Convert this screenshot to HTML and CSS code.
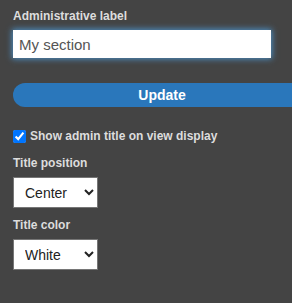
FILE: index.html
```html
<!DOCTYPE html>
<html lang="en">
<head>
    <meta charset="UTF-8">
    <title>Section settings</title>
    <link rel="stylesheet" href="styles.css">
</head>
<body>
    <div class="panel">
        <label class="label" for="admin-label">Administrative label</label>
        <input type="text" class="input" id="admin-label" value="My section">

        <button class="button">Update</button>

        <label class="check">
            <input type="checkbox" checked>
            <span>Show admin title on view display</span>
        </label>

        <div class="field">
            <label class="label" for="title-position">Title position</label>
            <select class="select" id="title-position">
                <option>Center</option>
                <option>Left</option>
                <option>Right</option>
            </select>
        </div>

        <div class="field">
            <label class="label" for="title-color">Title color</label>
            <select class="select" id="title-color">
                <option>White</option>
                <option>Black</option>
            </select>
        </div>
    </div>
</body>
</html>
```

FILE: styles.css
```css
* { margin: 0; padding: 0; box-sizing: border-box; }

body {
    font-family: 'Liberation Sans', Arial, sans-serif;
    background: #444;
    color: #ddd;
    overflow: hidden;
}

.panel {
    padding: 8px 0 8px 13px;
    overflow: hidden;
}

.label {
    display: block;
    font-size: 12px;
    font-weight: bold;
    line-height: 16px;
    margin-bottom: 6px;
}

.input {
    display: block;
    width: 258px;
    height: 28px;
    border: none;
    padding: 0 6px;
    font-family: inherit;
    font-size: 15px;
    color: #555;
    background: #fff;
    box-shadow: 0 0 6px 1px #4b8fc4;
    outline: none;
}

.button {
    display: block;
    width: 298px;
    height: 24px;
    margin-top: 25px;
    border: none;
    border-radius: 12px;
    background: #2a77bb;
    color: #fff;
    font-family: inherit;
    font-size: 14px;
    font-weight: bold;
    cursor: pointer;
}

.check {
    display: flex;
    align-items: center;
    gap: 4px;
    margin-top: 21px;
    font-size: 12px;
    font-weight: bold;
    line-height: 16px;
}

.check input {
    width: 13px;
    height: 13px;
    margin: 0;
}

.field { margin-top: 11px; }
.field + .field { margin-top: 9px; }

.select {
    display: block;
    width: 85px;
    height: 31px;
    padding: 0 4px 0 7px;
    border: 1px solid #767676;
    border-radius: 0;
    background: #fff;
    color: #222;
    font-family: inherit;
    font-size: 14px;
}
```
